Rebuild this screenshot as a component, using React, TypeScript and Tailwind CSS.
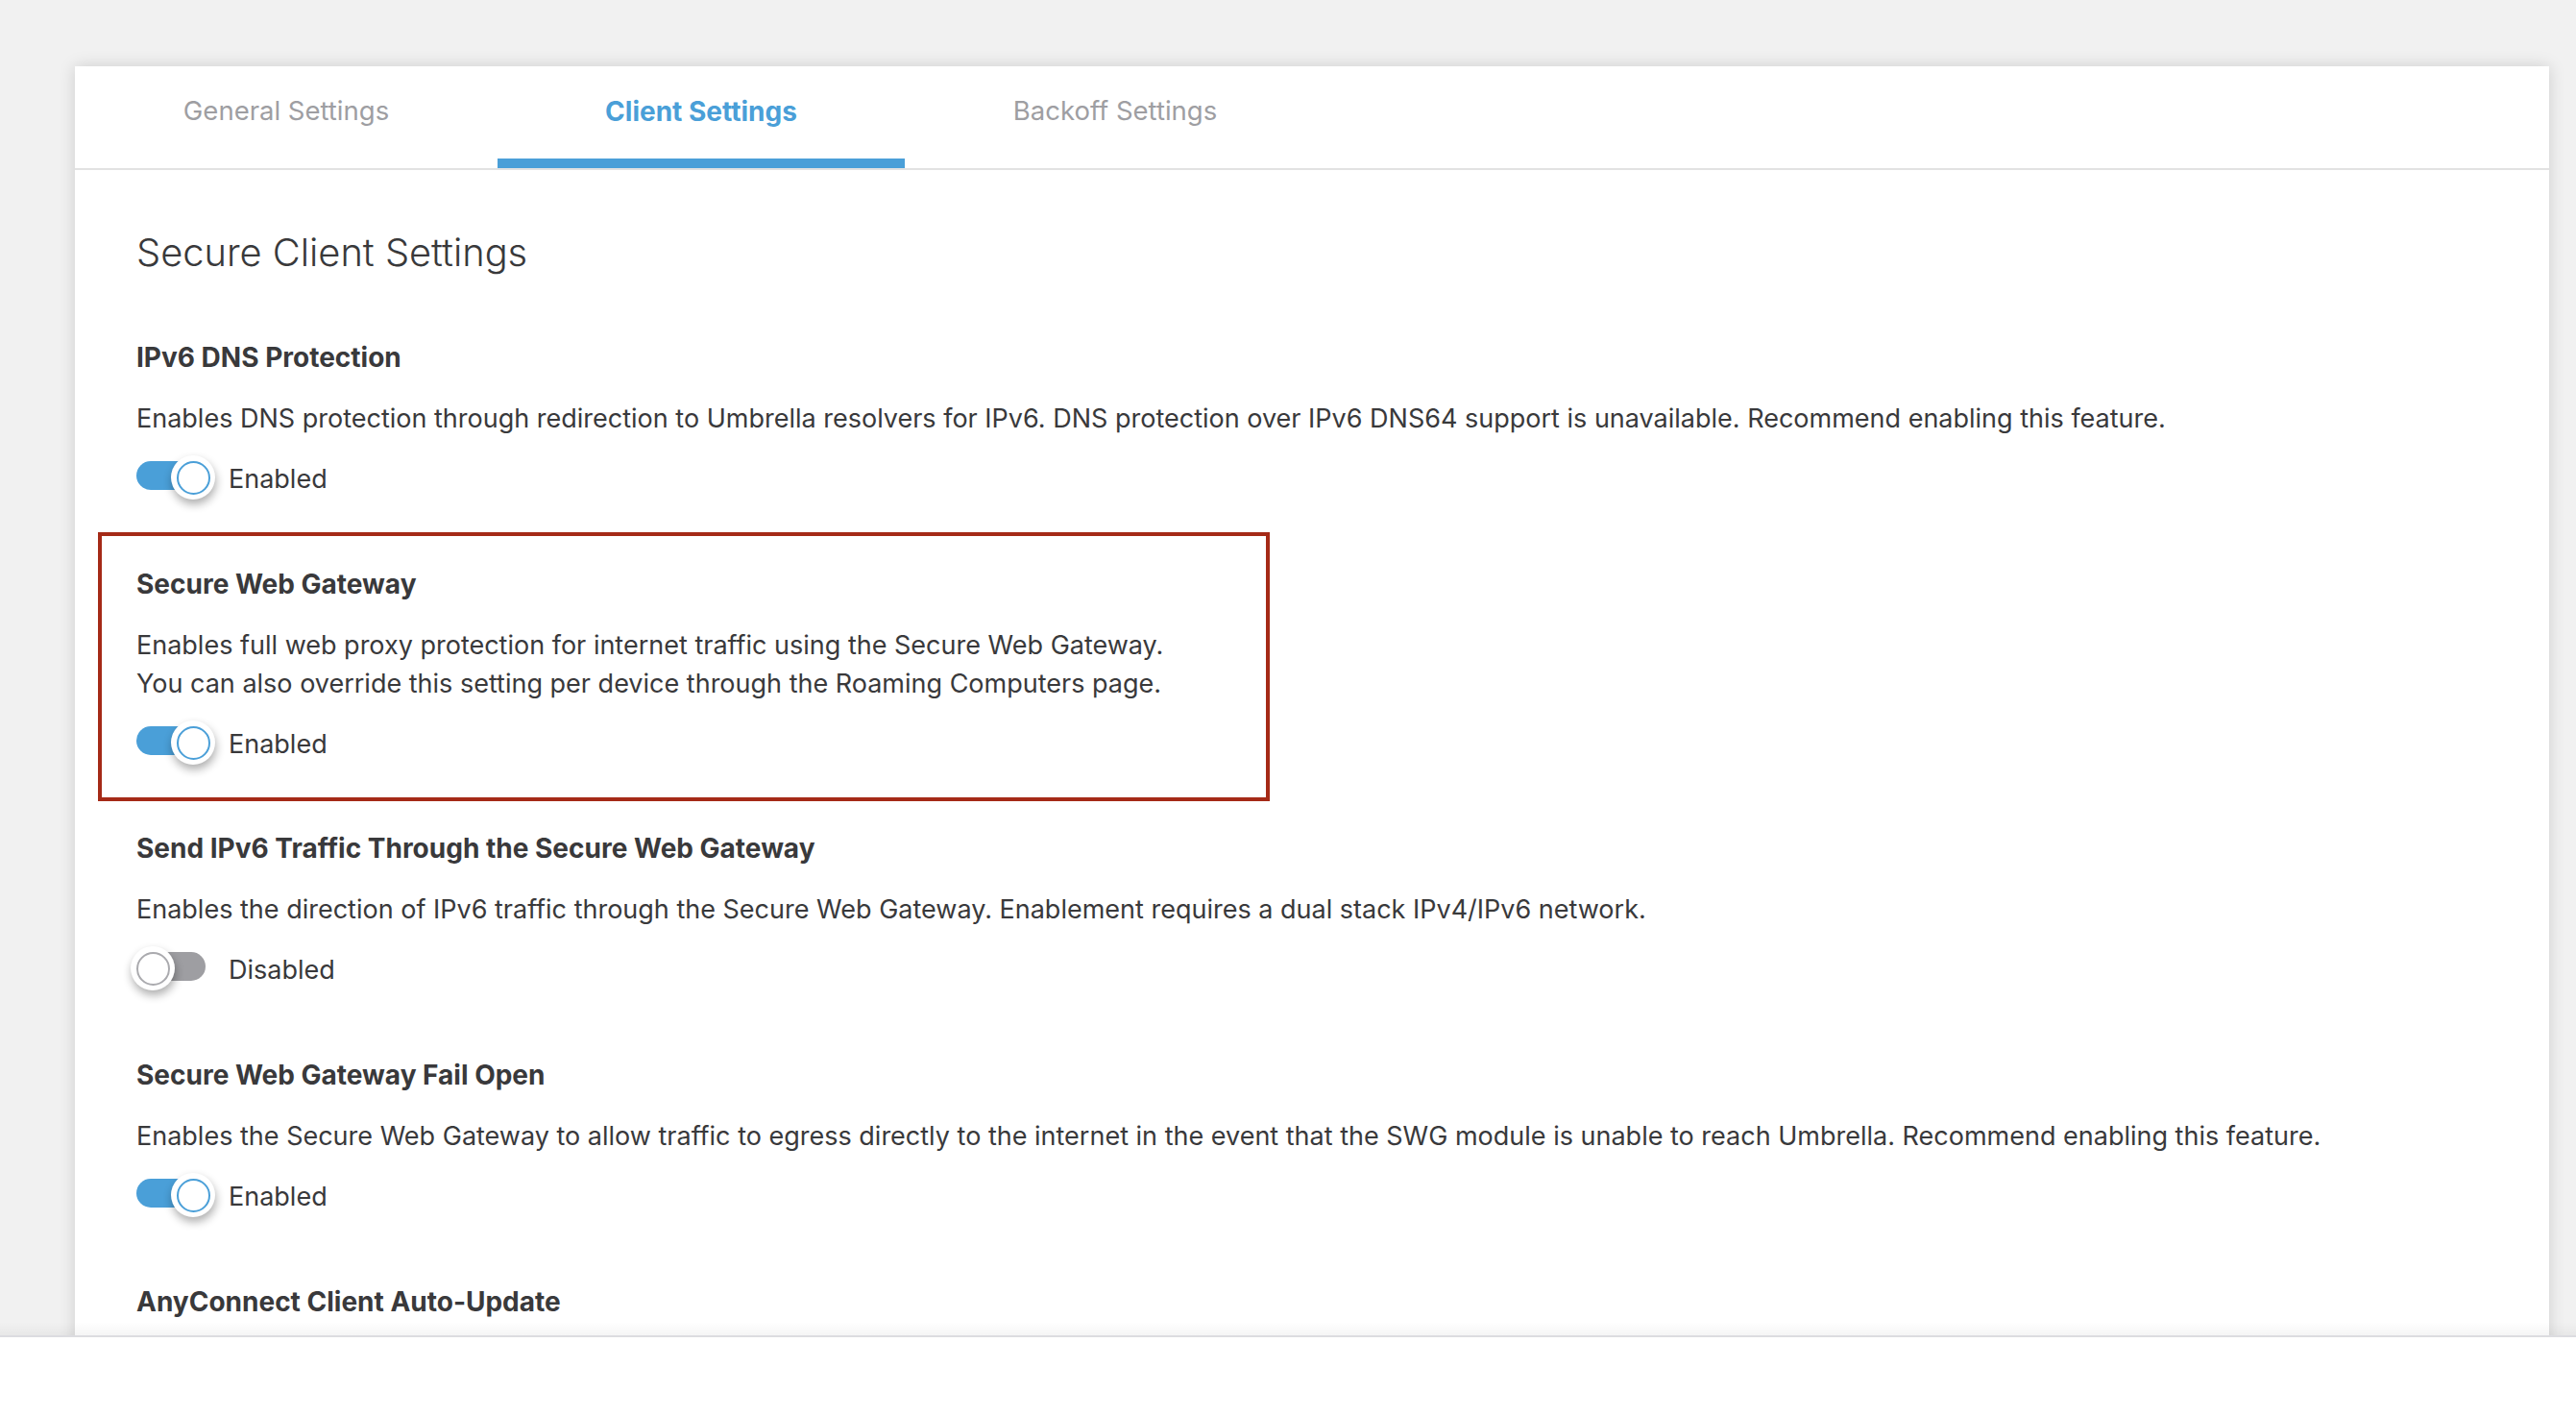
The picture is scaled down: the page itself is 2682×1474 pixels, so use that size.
const bodyFont = "font-['Inter','Liberation_Sans',sans-serif]";

function Toggle({ on }: { on: boolean }) {
  return (
    <div className="flex h-[46px] items-start">
      <div className={on ? "relative mt-[6px] h-[30px] w-[72px] rounded-full bg-[#4a9fd8]" : "relative mt-[6px] h-[30px] w-[72px] rounded-full bg-[#9e9ea2]"}>
        <div
          className={
            on
              ? "absolute -top-[6px] left-[36px] flex h-[46px] w-[46px] items-center justify-center rounded-full bg-white shadow-[1px_5px_10px_rgba(0,0,0,0.32)]"
              : "absolute -top-[6px] -left-[6px] flex h-[46px] w-[46px] items-center justify-center rounded-full bg-white shadow-[1px_5px_10px_rgba(0,0,0,0.32)]"
          }
        >
          <div className={on ? "h-[35px] w-[35px] rounded-full border-2 border-[#4a9fd8]" : "h-[35px] w-[35px] rounded-full border-2 border-[#aaaaae]"} />
        </div>
      </div>
      <span className="mt-[5px] ml-[24px] text-[27px] leading-[40px] text-[#39393b]">{on ? "Enabled" : "Disabled"}</span>
    </div>
  );
}

function Setting({ title, lines, on }: { title: string; lines: string[]; on: boolean }) {
  return (
    <>
      <h3 className="h-[40px] text-[28px] leading-[38px] font-bold text-[#39393b]">{title}</h3>
      <div className="mt-[23px] mb-[18px] text-[27px] leading-[40px] text-[#39393b]">
        {lines.map((l) => (
          <p key={l} className="whitespace-nowrap">{l}</p>
        ))}
      </div>
      <Toggle on={on} />
    </>
  );
}

export default function App() {
  return (
    <div className={`h-[1474px] w-full overflow-hidden bg-white ${bodyFont}`}>
      <div className="relative h-[1392px] overflow-hidden border-b-2 border-[#dcdce0] bg-[#f1f1f1] pt-[69px] pr-[28px] pl-[78px]">
        <div className="h-[1400px] bg-white shadow-[0_0_16px_rgba(0,0,0,0.15)]">
          <div className="flex h-[108px] border-b-2 border-[#e2e2e2]">
            <div className="flex h-[106px] w-[440px] items-center justify-center pb-[12px] text-[27.5px] text-[#9e9ea2]">General Settings</div>
            <div className="flex h-[106px] w-[424px] items-center justify-center border-b-[10px] border-[#4a9fd8] pb-[2px] text-[28px] font-bold text-[#4a9fd8]">Client Settings</div>
            <div className="flex h-[106px] w-[438px] items-center justify-center pb-[12px] text-[27.5px] text-[#9e9ea2]">Backoff Settings</div>
          </div>
          <div className="pl-[64px]">
            <h2 className="mt-[62px] text-[39.8px] leading-[48px] font-light text-[#39393b]">Secure Client Settings</h2>
            <div className="mt-[66px] mb-[69px]">
              <Setting
                title="IPv6 DNS Protection"
                lines={["Enables DNS protection through redirection to Umbrella resolvers for IPv6. DNS protection over IPv6 DNS64 support is unavailable. Recommend enabling this feature."]}
                on
              />
            </div>
            <div className="-mt-[35px] mb-[30px] -ml-[40px] w-[1220px] border-4 border-[#a52a17] pt-[31px] pb-[34px] pl-[36px]">
              <Setting
                title="Secure Web Gateway"
                lines={[
                  "Enables full web proxy protection for internet traffic using the Secure Web Gateway.",
                  "You can also override this setting per device through the Roaming Computers page.",
                ]}
                on
              />
            </div>
            <div className="mb-[69px]">
              <Setting
                title="Send IPv6 Traffic Through the Secure Web Gateway"
                lines={["Enables the direction of IPv6 traffic through the Secure Web Gateway. Enablement requires a dual stack IPv4/IPv6 network."]}
                on={false}
              />
            </div>
            <div className="mb-[69px]">
              <Setting
                title="Secure Web Gateway Fail Open"
                lines={["Enables the Secure Web Gateway to allow traffic to egress directly to the internet in the event that the SWG module is unable to reach Umbrella. Recommend enabling this feature."]}
                on
              />
            </div>
            <h3 className="h-[40px] text-[28px] leading-[38px] font-bold text-[#39393b]">AnyConnect Client Auto-Update</h3>
          </div>
        </div>
        <div className="absolute inset-x-0 bottom-0 h-[14px] bg-gradient-to-b from-transparent to-[rgba(0,0,0,0.04)]" />
      </div>
    </div>
  );
}
